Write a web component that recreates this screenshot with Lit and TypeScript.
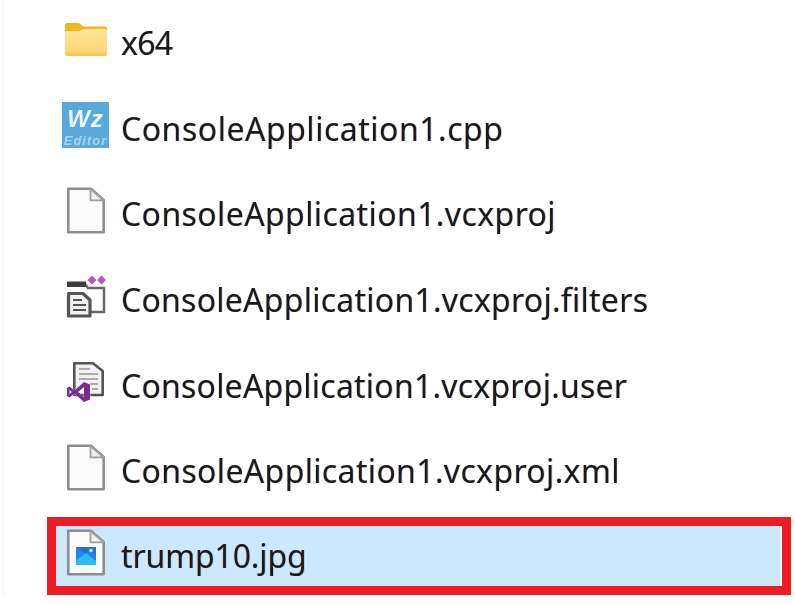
import { LitElement, html, css, svg } from 'lit';
import { customElement } from 'lit/decorators.js';

const icon = (body: unknown) => html`<svg class="icon" viewBox="0 0 48 56" width="48" height="56">${body}</svg>`;

const pageBody = (inner: unknown = svg``) => svg`
  <path d="M6.300 2.800H29L41.700 14V46.200H6.300Z" fill="#fbfbfb" stroke="#8e8e8e" stroke-width="2.600" stroke-linejoin="round"/>
  <path d="M28.500 3V14.300H41.500Z" fill="#f0f0f0" stroke="#a0a0a0" stroke-width="1.800" stroke-linejoin="round"/>
  ${inner}`;

const folderBody = svg`
  <defs>
    <linearGradient id="fold" x1="0" y1="0" x2="0" y2="1">
      <stop offset="0" stop-color="#fee49a"/>
      <stop offset="0.8" stop-color="#fdd77c"/>
      <stop offset="1" stop-color="#f6c146"/>
    </linearGradient>
  </defs>
  <path d="M3 10a2 2 0 0 1 2-2h11a3 3 0 0 1 2 .8l3 2.700h22a2 2 0 0 1 2 2V20H3Z" fill="#f5b61e"/>
  <path d="M3 16h14l4-2h22.500a1.500 1.500 0 0 1 1.500 1.500V39a2 2 0 0 1-2 2H5a2 2 0 0 1-2-2Z" fill="url(#fold)"/>`;

const filtersBody = svg`
  <path d="M6 12H23L26 16H42V40H28" fill="none" stroke="#666" stroke-width="2.400"/>
  <path d="M5 9.500H24V15H5Z" fill="#3d3d3d"/>
  <path d="M6.500 21.500H21L28 28V44H6.500Z" fill="#f1f1f1" stroke="#555" stroke-width="3.200" stroke-linejoin="round"/>
  <path d="M11 28H20M11 33H24M11 38H24" stroke="#555" stroke-width="2"/>
  <path d="M30 3.500l4.500 4.500L30 12.500 25.500 8ZM39.500 3.500L44 8l-4.500 4.500L35 8Z" fill="#ab5fb8"/>`;

const vsBody = svg`
  <path d="M12.300 6.300H31L40.700 14V38H12.300Z" fill="#f2f2f2" stroke="#555" stroke-width="2.600" stroke-linejoin="round"/>
  <path d="M17 12H28M17 17H36M17 22H36M28 27H36M30 32H36" stroke="#acacac" stroke-width="2.200"/>
  <path d="M22 25L28 27.500V42.500L22 45L12.500 36.500L7.500 40.500L5 39V31L7.500 29.500L12.500 33.500ZM22 30L16 35L22 40ZM7.500 33V37L10 35Z" fill="#7b2a92" fill-rule="evenodd" stroke="#fff" stroke-width="0.600" paint-order="stroke"/>`;

const imageInner = svg`
  <path d="M14 19H34V37H14Z" fill="#1e8ae6"/>
  <path d="M14 19H34V28L28 23 23 26Z" fill="#2f6cd6"/>
  <path d="M14 37V32L24 25 34 33V37Z" fill="#2cbcf3"/>
  <circle cx="29" cy="22.500" r="1.800" fill="#bfe6fb"/>`;

@customElement('app-root')
export class AppRoot extends LitElement {
  static styles = css`
    :host {
      display: block;
      width: 795px;
      height: 604px;
      overflow: hidden;
      background: #fff;
      font-family: 'Noto Sans', 'Open Sans', sans-serif;
      color: #1a1a1a;
    }

    .list {
      display: flex;
      flex-direction: column;
      margin-left: 2px;
      padding: 0 4px 0 42px;
      border-left: 3px solid #fafafa;
      filter: blur(0.55px);
    }

    .row {
      display: flex;
      align-items: center;
      height: 85.6px;
      gap: 11px;
      padding-left: 15px;
      font-size: 32px;
      letter-spacing: 0.22px;
      white-space: nowrap;
      text-shadow:
        -0.7px 0 rgb(225 130 40 / 0.3),
        0.7px 0 rgb(40 110 230 / 0.3);
    }

    .row.x64 {
      letter-spacing: -0.7px;
    }

    .row.cpp {
      letter-spacing: 0.52px;
    }

    .row.proj {
      letter-spacing: 0.4px;
    }

    .row.filters {
      letter-spacing: 0.25px;
    }

    .row.xml {
      letter-spacing: 0.35px;
    }

    .row.selected {
      box-sizing: border-box;
      height: 78px;
      margin-top: 3.400px;
      padding-left: 6px;
      letter-spacing: -0.13px;
      background: #cce8ff;
      border: 9px solid #ed1c24;
      box-shadow: inset -2px 0 0 #f4f9fd;
    }

    .icon {
      flex: none;
      width: 48px;
      height: 56px;
    }

    .wz {
      flex: none;
      box-sizing: border-box;
      display: flex;
      flex-direction: column;
      align-items: center;
      width: 47px;
      height: 46px;
      margin: 0 1px 7px 0;
      padding-top: 6px;
      overflow: hidden;
      background: #5aa9dd;
      color: #eef7fc;
      font-family: 'Liberation Sans', sans-serif;
      font-style: italic;
      font-weight: 700;
      text-shadow: none;
    }

    .wz-big {
      height: 22px;
      font-size: 24px;
      line-height: 22px;
      letter-spacing: 1px;
    }

    .wz-small {
      height: 13px;
      margin-top: 4px;
      font-size: 13px;
      line-height: 13px;
      letter-spacing: 1px;
      opacity: 0.55;
    }
  `;

  render() {
    return html`
      <div class="list">
        <div class="row x64">${icon(folderBody)}<span>x64</span></div>
        <div class="row cpp">
          <div class="wz"><span class="wz-big">Wz</span><span class="wz-small">Editor</span></div>
          <span>ConsoleApplication1.cpp</span>
        </div>
        <div class="row proj">${icon(pageBody())}<span>ConsoleApplication1.vcxproj</span></div>
        <div class="row filters">${icon(filtersBody)}<span>ConsoleApplication1.vcxproj.filters</span></div>
        <div class="row">${icon(vsBody)}<span>ConsoleApplication1.vcxproj.user</span></div>
        <div class="row xml">${icon(pageBody())}<span>ConsoleApplication1.vcxproj.xml</span></div>
        <div class="row selected">${icon(pageBody(imageInner))}<span>trump10.jpg</span></div>
      </div>
    `;
  }
}
